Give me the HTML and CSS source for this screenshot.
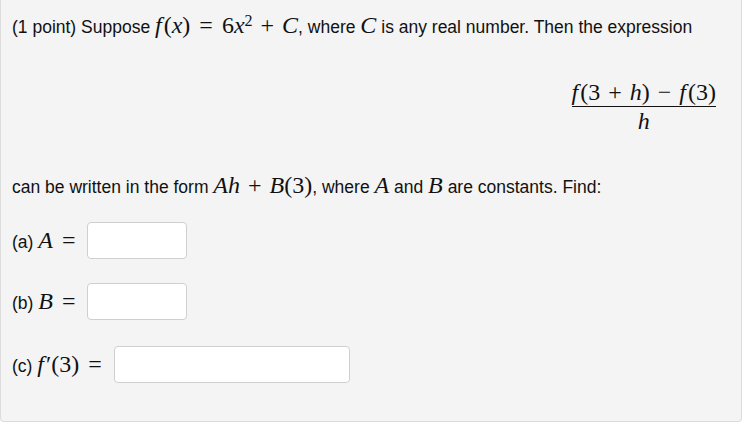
FILE: index.html
```html
<!DOCTYPE html>
<html>
<head>
<meta charset="utf-8">
<link rel="stylesheet" href="styles.css">
</head>
<body>
<div class="panel">
  <p class="line first">(1 point) Suppose <span class="m"><i class="f">f</i>(<i>x</i>)<span class="rel">=</span>6<i>x</i><sup>2</sup><span class="op">+</span><i>C</i></span>, where <span class="m"><i>C</i></span> is any real number. Then the expression</p>
  <div class="display">
    <div class="frac">
      <div class="num m"><i class="f">f</i>(3<span class="op">+</span><i>h</i>)<span class="op">−</span><i class="f">f</i>(3)</div>
      <div class="den m"><i>h</i></div>
    </div>
  </div>
  <p class="line second">can be written in the form <span class="m"><i>Ah</i><span class="op">+</span><i>B</i>(3)</span>, where <span class="m"><i>A</i></span> and <span class="m"><i>B</i></span> are constants. Find:</p>
  <div class="row row-a"><span class="label">(a) <span class="m"><i>A</i><span class="rel">=</span></span></span><span class="box box-s"></span></div>
  <div class="row row-b"><span class="label">(b) <span class="m"><i>B</i><span class="rel">=</span></span></span><span class="box box-s"></span></div>
  <div class="row row-c"><span class="label">(c) <span class="m"><i class="f">f</i>′(3)<span class="rel">=</span></span></span><span class="box box-l"></span></div>
</div>
</body>
</html>
```
FILE: styles.css
```css
html, body {
  margin: 0;
  padding: 0;
  background: #ffffff;
}
body {
  font-family: "Liberation Sans", Arial, sans-serif;
  font-size: 17.5px;
  line-height: 20px;
  color: #111;
}
.panel {
  box-sizing: border-box;
  height: 422px;
  background: #f4f4f4;
  border: 1px solid #dcdcdc;
  border-top: none;
  border-radius: 0 0 4px 4px;
  padding: 0 11px;
}
.line {
  margin: 0;
  line-height: 20px;
}
.first {
  padding-top: 15px;
}
.m {
  font-family: "Liberation Serif", "Times New Roman", serif;
  font-size: 24px;
}
.m i {
  font-style: italic;
}
.m i.f {
  margin-right: 2px;
}
.m sup {
  font-size: 16px;
  line-height: 0;
  vertical-align: 0.45em;
}
.rel {
  margin: 0 9px;
}
.op {
  margin: 0 8px;
}
.display {
  display: flex;
  justify-content: flex-end;
  padding-right: 14px;
  margin-top: 44px;
}
.frac {
  display: flex;
  flex-direction: column;
  align-items: center;
}
.num {
  line-height: 22px;
  padding: 0 0 3px;
  border-bottom: 1.5px solid #111;
}
.den {
  line-height: 22px;
  padding-top: 3px;
}
.second {
  margin-top: 43px;
}
.row {
  display: flex;
  align-items: center;
  gap: 3px;
}
.row-a {
  margin-top: 25px;
}
.row-b {
  margin-top: 24px;
}
.row-c {
  margin-top: 26px;
}
.box {
  display: block;
  height: 37px;
  box-sizing: border-box;
  background: #fff;
  border: 1px solid #cfcfcf;
  border-radius: 4px;
}
.box-s {
  width: 100px;
}
.box-l {
  width: 236px;
}
```
